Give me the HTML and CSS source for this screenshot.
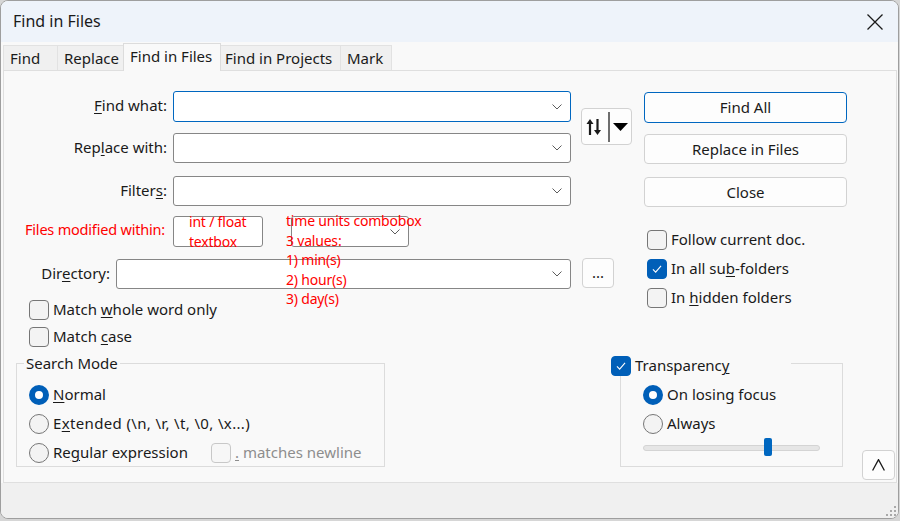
FILE: index.html
```html
<!DOCTYPE html>
<html>
<head>
<meta charset="utf-8">
<title>Find in Files</title>
<link rel="stylesheet" href="styles.css">
</head>
<body>
<div class="window">
  <div class="titlebar">
    <span class="title">Find in Files</span>
    <svg class="close-icon" viewBox="0 0 16 16"><path d="M0.5 0.5 L15.5 15.5 M15.5 0.5 L0.5 15.5"/></svg>
  </div>
  <div class="tabs">
    <div class="tab w-find">Find</div>
    <div class="tab w-replace">Replace</div>
    <div class="tab active w-fif">Find in Files</div>
    <div class="tab w-fip">Find in Projects</div>
    <div class="tab w-mark">Mark</div>
  </div>
  <div class="panel">
    <div class="form">
      <div class="field c1 r1">
        <span class="lbl"><u>F</u>ind what:</span>
        <div class="combo wide focus tall"><svg class="chev" viewBox="0 0 10 6"><polyline points="0.5,0.5 5,5 9.5,0.5"/></svg></div>
      </div>
      <div class="field c1 r2">
        <span class="lbl">Rep<u>l</u>ace with:</span>
        <div class="combo wide"><svg class="chev" viewBox="0 0 10 6"><polyline points="0.5,0.5 5,5 9.5,0.5"/></svg></div>
      </div>
      <div class="field c1 r3">
        <span class="lbl">Filter<u>s</u>:</span>
        <div class="combo wide"><svg class="chev" viewBox="0 0 10 6"><polyline points="0.5,0.5 5,5 9.5,0.5"/></svg></div>
      </div>
      <div class="field c1 r4">
        <span class="lbl red">Files modified within:</span>
        <div class="textbox">
          <div class="annot annot-tb">int / float<br>textbox</div>
        </div>
        <div class="combo units"><svg class="chev" viewBox="0 0 10 6"><polyline points="0.5,0.5 5,5 9.5,0.5"/></svg>
          <div class="annot annot-cb">time units combobox<br>3 values:<br>1) min(s)<br>2) hour(s)<br>3) day(s)</div>
        </div>
      </div>
      <div class="field dir c1 r5">
        <span class="lbl">Dir<u>e</u>ctory:</span>
        <div class="combo"><svg class="chev" viewBox="0 0 10 6"><polyline points="0.5,0.5 5,5 9.5,0.5"/></svg></div>
      </div>
      <label class="check c1 r6 lcheck"><span class="box"></span><span class="txt">Match <u>w</u>hole word only</span></label>
      <label class="check c1 r7 lcheck"><span class="box"></span><span class="txt">Match <u>c</u>ase</span></label>

      <button class="btn swap c2">
        <svg viewBox="0 0 51 37" width="51" height="37">
          <path class="arr" d="M9 13.5 V27"/>
          <polygon class="arrh" points="5.5,16 9,11 12.5,16"/>
          <path class="arr" d="M16.5 11 V24.5"/>
          <polygon class="arrh" points="13,22 16.5,27 20,22"/>
          <rect x="27" y="4" width="2" height="30" fill="#6e6e6e"/>
          <polygon points="32,15 47,15 39.5,23" fill="#000"/>
        </svg>
      </button>
      <button class="btn dots c2 r5">...</button>

      <button class="btn main default c3 r1">Find All</button>
      <button class="btn main c3 r2">Replace in Files</button>
      <button class="btn main c3 r3">Close</button>
      <div class="rchecks c3">
        <label class="check"><span class="box"></span><span class="txt">Follow current doc.</span></label>
        <label class="check"><span class="box on"><svg viewBox="0 0 20 20"><polyline points="5.5,10.5 8.5,13.5 14.5,6.5"/></svg></span><span class="txt">In all su<u>b</u>-folders</span></label>
        <label class="check"><span class="box"></span><span class="txt">In <u>h</u>idden folders</span></label>
      </div>
    </div>

    <div class="bottom">
      <div class="group search">
        <span class="gtitle">Search Mode</span>
        <div class="opts">
          <label class="check"><span class="radio on"></span><span class="txt"><u>N</u>ormal</span></label>
          <label class="check"><span class="radio"></span><span class="txt ext">E<u>x</u>tended (\n, \r, \t, \0, \x...)</span></label>
          <div class="optrow">
            <label class="check regex"><span class="radio"></span><span class="txt">Re<u>g</u>ular expression</span></label>
            <label class="check disabled"><span class="box"></span><span class="txt"><u>.</u> matches newline</span></label>
          </div>
        </div>
      </div>
      <div class="group trans">
        <label class="check ttitle"><span class="box on"><svg viewBox="0 0 20 20"><polyline points="5.5,10.5 8.5,13.5 14.5,6.5"/></svg></span><span class="txt">Transparenc<u>y</u></span></label>
        <div class="opts">
          <label class="check"><span class="radio on"></span><span class="txt">On losing focus</span></label>
          <label class="check"><span class="radio"></span><span class="txt">Always</span></label>
          <div class="slider">
            <div class="track"></div>
            <div class="thumb" style="left:121px"></div>
          </div>
        </div>
      </div>
      <button class="btn upbtn"><svg viewBox="0 0 13 12" width="13" height="12"><polyline points="0.6,11.5 6.5,0.6 12.4,11.5"/></svg></button>
    </div>
  </div>
  <div class="statusbar">
    <svg class="grip" viewBox="0 0 11 11" width="11" height="11">
      <rect x="8" y="0" width="2" height="2"/>
      <rect x="4" y="4" width="2" height="2"/><rect x="8" y="4" width="2" height="2"/>
      <rect x="0" y="8" width="2" height="2"/><rect x="4" y="8" width="2" height="2"/><rect x="8" y="8" width="2" height="2"/>
    </svg>
  </div>
</div>
</body>
</html>
```

FILE: styles.css
```css
* { box-sizing: border-box; }
html, body { margin: 0; padding: 0; }
body {
  width: 900px;
  height: 521px;
  overflow: hidden;
  background: #d6d6d6;
  font-family: "Noto Sans", sans-serif;
  font-size: 15px;
  color: #1a1a1a;
}
u { text-decoration-thickness: 1px; text-underline-offset: 2px; }

.window {
  width: 899px;
  height: 519px;
  border: 1px solid #9e9e9e;
  border-radius: 8px;
  background: #f9f9f9;
  overflow: hidden;
  display: flex;
  flex-direction: column;
}

.titlebar {
  height: 41px;
  flex: none;
  background: #eef3fa;
  display: flex;
  align-items: center;
  justify-content: space-between;
  padding: 0 15px 0 12px;
}
.title { font-size: 16px; line-height: 20px; padding-bottom: 1px; }
.close-icon { width: 16px; height: 16px; display: block; }
.close-icon path { stroke: #1a1a1a; stroke-width: 1.3; fill: none; }

.tabs {
  height: 28px;
  flex: none;
  display: flex;
  align-items: flex-end;
  padding-left: 2px;
  position: relative;
  z-index: 2;
}
.tab {
  height: 25px;
  border: 1px solid #e2e2e2;
  border-bottom: none;
  border-right: none;
  background: #f0f0f0;
  padding-left: 6px;
  line-height: 24px;
  white-space: nowrap;
}
.tab:last-child { border-right: 1px solid #e2e2e2; }
.tab.active {
  height: 28px;
  margin-bottom: -1px;
  background: #f9f9f9;
  line-height: 25px;
  border-color: #dcdcdc;
  border-right: 1px solid #dcdcdc;
}
.w-find { width: 54px; }
.w-replace { width: 66px; }
.w-fif { width: 98px; padding-left: 6px; }
.w-fip { width: 119px; padding-left: 4px; border-left: none; }
.w-mark { width: 52px; }

.panel {
  height: 413px;
  flex: none;
  margin: 0 1px 0 2px;
  border: 1px solid #dfdfdf;
  padding-top: 20px;
  position: relative;
}

.form {
  display: grid;
  grid-template-columns: 567px 73px 203px;
  grid-template-rows: 42px 43px 40px 43px 41px 27px 27px;
}
.c1 { grid-column: 1; }
.c2 { grid-column: 2; }
.c3 { grid-column: 3; }
.r1 { grid-row: 1; }
.r2 { grid-row: 2; }
.r3 { grid-row: 3; }
.r4 { grid-row: 4; }
.r5 { grid-row: 5; }
.r6 { grid-row: 6; }
.r7 { grid-row: 7; }

.field {
  display: flex;
  align-items: center;
  gap: 6px;
  align-self: start;
}
.lbl {
  width: 163px;
  flex: none;
  text-align: right;
  line-height: 20px;
  padding-bottom: 3px;
  white-space: nowrap;
}
.lbl.red {
  color: #ff0000;
  font-size: 14.5px;
  letter-spacing: -0.2px;
  padding-right: 2px;
  padding-bottom: 5px;
}
.dir .lbl { width: 106px; }
.dir .combo { flex: 1; }

.combo {
  position: relative;
  height: 30px;
  background: #ffffff;
  border: 1px solid #868686;
  border-radius: 3px;
  display: flex;
  align-items: center;
  justify-content: flex-end;
  padding-right: 8px;
}
.combo.tall { height: 31px; }
.combo.wide { width: 398px; }
.combo.focus { border-color: #0067c0; }
.combo.units { width: 118px; height: 31px; margin-left: 22px; }
.chev { width: 10px; height: 6px; display: block; }
.chev polyline { fill: none; stroke: #5c5c5c; stroke-width: 1; }

.textbox {
  position: relative;
  width: 90px;
  height: 31px;
  background: #ffffff;
  border: 1px solid #868686;
  border-radius: 3px;
}
.annot {
  position: absolute;
  z-index: 5;
  color: #ff0000;
  font-size: 14px;
  line-height: 19.5px;
  letter-spacing: -0.2px;
  white-space: nowrap;
  text-align: left;
}
.annot-tb { left: 15px; top: -5px; }
.annot-cb { left: -6px; top: -6px; }

.check {
  display: flex;
  align-items: center;
  gap: 4px;
  height: 20px;
  line-height: 20px;
  white-space: nowrap;
  align-self: start;
}
.check .txt { padding-bottom: 2px; }
.lcheck { margin-left: 25px; }
.box {
  width: 20px;
  height: 20px;
  flex: none;
  border: 1px solid #767676;
  border-radius: 4px;
  background: #f3f3f3;
}
.box.on {
  background: #005fb8;
  border-color: #005fb8;
}
.box svg { display: block; width: 18px; height: 18px; }
.box svg polyline { fill: none; stroke: #ffffff; stroke-width: 1.2; }
.radio {
  width: 20px;
  height: 20px;
  flex: none;
  border-radius: 50%;
  border: 1px solid #767676;
  background: #f3f3f3;
}
.radio.on {
  border: 6px solid #005fb8;
  background: #ffffff;
}
.ext { letter-spacing: 0.35px; }
.disabled { color: #8d8d8d; }
.disabled .box { border-color: #c8c8c8; background: #f7f7f7; }

.btn {
  font: inherit;
  color: #1a1a1a;
  background: #fdfdfd;
  border: 1px solid #d2d2d2;
  border-radius: 4px;
  padding: 0;
  margin: 0;
  display: flex;
  align-items: center;
  justify-content: center;
  align-self: start;
}
.btn.main { width: 203px; height: 30px; margin-top: 1px; padding-bottom: 1px; }
.btn.default { border-color: #0067c0; height: 31px; }
.swap {
  grid-row: 1 / 3;
  width: 51px;
  height: 37px;
  margin: 17px 0 0 10px;
  position: relative;
}
.swap svg { position: absolute; left: -1px; top: -1px; }
.swap .arr { stroke: #1a1a1a; stroke-width: 2.2; fill: none; }
.swap .arrh { fill: #1a1a1a; }
.dots {
  width: 32px;
  height: 30px;
  margin: -1px 0 0 11px;
  line-height: 20px;
  padding-bottom: 2px;
}

.rchecks {
  grid-row: 4 / 8;
  margin: 14px 0 0 3px;
  display: flex;
  flex-direction: column;
  gap: 9px;
  align-self: start;
}

.bottom {
  display: flex;
  align-items: flex-start;
  margin-top: 9px;
}
.group {
  position: relative;
  height: 104px;
  flex: none;
  border: 1px solid #dcdcdc;
}
.search { width: 369px; margin-left: 12px; padding: 21px 0 0 12px; }
.trans { width: 223px; margin-left: 235px; padding: 21px 0 0 22px; }
.gtitle {
  position: absolute;
  top: -11px;
  left: 7px;
  padding: 0 2px;
  background: #f9f9f9;
  line-height: 20px;
}
.ttitle {
  position: absolute;
  top: -8px;
  left: -10px;
  width: 180px;
  background: #f9f9f9;
}
.opts { display: flex; flex-direction: column; gap: 9px; }
.optrow { display: flex; align-items: center; }
.regex { width: 182px; }

.slider {
  position: relative;
  width: 177px;
  height: 18px;
  margin-top: -5px;
}
.track {
  position: absolute;
  left: 0;
  right: 0;
  top: 7px;
  height: 6px;
  background: #e6e6e6;
  border: 1px solid #d4d4d4;
  border-radius: 3px;
}
.thumb {
  position: absolute;
  top: 0;
  width: 8px;
  height: 18px;
  background: #0067c0;
  border-radius: 2px;
}

.upbtn {
  width: 33px;
  height: 30px;
  margin: 87px 0 0 19px;
}
.upbtn svg { display: block; }
.upbtn polyline { fill: none; stroke: #1a1a1a; stroke-width: 1.3; }

.statusbar {
  flex: 1;
  background: #f0f0f0;
  position: relative;
}
.grip {
  position: absolute;
  right: 1px;
  bottom: 1px;
}
.grip rect { fill: #a9a9a9; }
```
